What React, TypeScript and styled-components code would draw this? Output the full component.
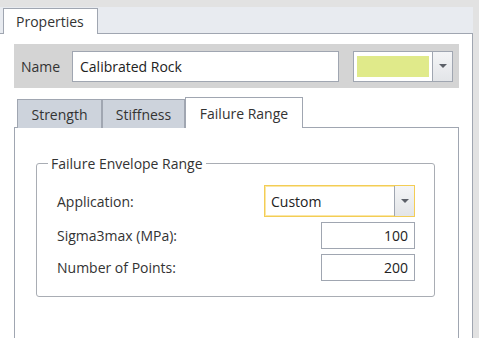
import styled, { createGlobalStyle } from "styled-components";

const GlobalStyle = createGlobalStyle`
  html, body {
    margin: 0;
    padding: 0;
    background: #e2e2e2;
  }
  body {
    font-family: "Open Sans", "Noto Sans", "Liberation Sans", sans-serif;
    font-size: 13px;
    color: #333;
  }
`;

const App = () => {
  return (
    <>
      <GlobalStyle />
      <Window>
        <TopStrip />
        <Main>
          <TabStrip>
            <OuterTab>Properties</OuterTab>
          </TabStrip>
          <Panel>
            <NameBand>
              <NameLabel>Name</NameLabel>
              <TextBox value="Calibrated Rock" readOnly />
              <ColorCombo>
                <SwatchWrap>
                  <Swatch />
                </SwatchWrap>
                <DropButton>
                  <Arrow />
                </DropButton>
              </ColorCombo>
            </NameBand>

            <InnerTabs>
              <InnerTab $width={85}>Strength</InnerTab>
              <InnerTab $width={83}>Stiffness</InnerTab>
              <InnerTab $width={118} $active>
                Failure Range
              </InnerTab>
            </InnerTabs>
            <InnerPanel>
              <GroupBox>
                <Legend>Failure Envelope Range</Legend>
                <FormGrid>
                  <FieldLabel>Application:</FieldLabel>
                  <Combo>
                    <ComboText>Custom</ComboText>
                    <DropButton>
                      <Arrow />
                    </DropButton>
                  </Combo>
                  <FieldLabel>Sigma3max (MPa):</FieldLabel>
                  <NumberBox value="100" readOnly />
                  <FieldLabel>Number of Points:</FieldLabel>
                  <NumberBox value="200" readOnly />
                </FormGrid>
              </GroupBox>
            </InnerPanel>
          </Panel>
        </Main>
      </Window>
    </>
  );
};

const Window = styled.div`
  width: 479px;
  height: 338px;
  display: flex;
  flex-direction: column;
  overflow: hidden;
  background: #e2e2e2;
`;

const TopStrip = styled.div`
  height: 7px;
  flex: none;
`;

const Main = styled.div`
  width: 473px;
  flex: 1;
  display: flex;
  flex-direction: column;
`;

const TabStrip = styled.div`
  height: 26px;
  flex: none;
  background: #e8ebf0;
  display: flex;
  align-items: flex-end;
  padding-left: 3px;
`;

const OuterTab = styled.div`
  width: 95px;
  height: 26px;
  box-sizing: border-box;
  background: #fff;
  border: 1px solid #a0a6b1;
  border-bottom: none;
  display: flex;
  align-items: center;
  padding-left: 12px;
  font-size: 14px;
  color: #333;
  margin-bottom: -1px;
  position: relative;
  z-index: 1;
`;

const Panel = styled.div`
  flex: 1;
  background: #fff;
  border-top: 1px solid #a0a6b1;
  border-right: 1px solid #a0a6b1;
  padding: 10px 0 0 14px;
  display: flex;
  flex-direction: column;
`;

const NameBand = styled.div`
  width: 445px;
  height: 44px;
  box-sizing: border-box;
  background: #d4d4d4;
  display: flex;
  align-items: center;
  padding-left: 7px;
`;

const NameLabel = styled.span`
  width: 51px;
  font-size: 14px;
  color: #333;
`;

const TextBox = styled.input`
  width: 267px;
  height: 31px;
  box-sizing: border-box;
  border: 1px solid #a0a6b1;
  background: #fff;
  padding: 0 0 0 7px;
  font-family: inherit;
  font-size: 14px;
  color: #222;
  outline: none;
`;

const ColorCombo = styled.div`
  margin-left: 14px;
  width: 100px;
  height: 31px;
  box-sizing: border-box;
  border: 1px solid #a0a6b1;
  background: #fff;
  display: flex;
`;

const SwatchWrap = styled.div`
  flex: 1;
  padding: 4px 3px;
  display: flex;
`;

const Swatch = styled.div`
  flex: 1;
  background: #e0ea8a;
`;

const DropButton = styled.div`
  width: 19px;
  flex: none;
  border-left: 1px solid #a0a6b1;
  background: linear-gradient(#f4f5f7, #e3e5e8);
  display: flex;
  align-items: center;
  justify-content: center;
`;

const Arrow = styled.div`
  width: 0;
  height: 0;
  border-left: 4px solid transparent;
  border-right: 4px solid transparent;
  border-top: 4px solid #5c6068;
`;

const InnerTabs = styled.div`
  margin-top: 9px;
  height: 30px;
  display: flex;
  align-items: flex-end;
  padding-left: 3px;
`;

const InnerTab = styled.div<{ $width: number; $active?: boolean }>`
  width: ${(p) => p.$width}px;
  height: ${(p) => (p.$active ? 31 : 29)}px;
  box-sizing: border-box;
  background: ${(p) => (p.$active ? "#fff" : "#cdd3dc")};
  border: 1px solid #a0a6b1;
  border-bottom: none;
  & + & {
    border-left: ${(p) => (p.$active ? "1px solid #a0a6b1" : "none")};
  }
  display: flex;
  align-items: center;
  justify-content: center;
  font-size: 14px;
  color: #333;
  margin-bottom: -1px;
  position: relative;
  z-index: 1;
`;

const InnerPanel = styled.div`
  width: 445px;
  flex: 1;
  box-sizing: border-box;
  border: 1px solid #a0a6b1;
  border-bottom: none;
  padding: 26px 0 0 21px;
`;

const GroupBox = styled.fieldset`
  width: 399px;
  box-sizing: border-box;
  margin: 0;
  border: 1px solid #a9adb4;
  border-radius: 3px;
  padding: 12px 19px 15px 20px;
`;

const Legend = styled.legend`
  margin-left: -9px;
  padding: 0 3px;
  font-size: 14px;
  color: #333;
`;

const FormGrid = styled.div`
  display: grid;
  grid-template-columns: 1fr auto;
  row-gap: 5px;
  align-items: center;
  justify-items: end;
`;

const FieldLabel = styled.span`
  justify-self: start;
  font-size: 14px;
  color: #333;
`;

const Combo = styled.div`
  width: 151px;
  height: 32px;
  box-sizing: border-box;
  border: 1px solid #f3cd55;
  box-shadow: inset 0 0 0 1px #fbe7a6;
  background: #fff;
  display: flex;
`;

const ComboText = styled.span`
  flex: 1;
  display: flex;
  align-items: center;
  padding-left: 6px;
  font-size: 14px;
  color: #222;
`;

const NumberBox = styled.input`
  width: 94px;
  height: 27px;
  box-sizing: border-box;
  border: 1px solid #a0a6b1;
  background: #fff;
  text-align: right;
  padding: 0 6px 0 0;
  font-family: inherit;
  font-size: 14px;
  color: #222;
  outline: none;
`;

export default App;
